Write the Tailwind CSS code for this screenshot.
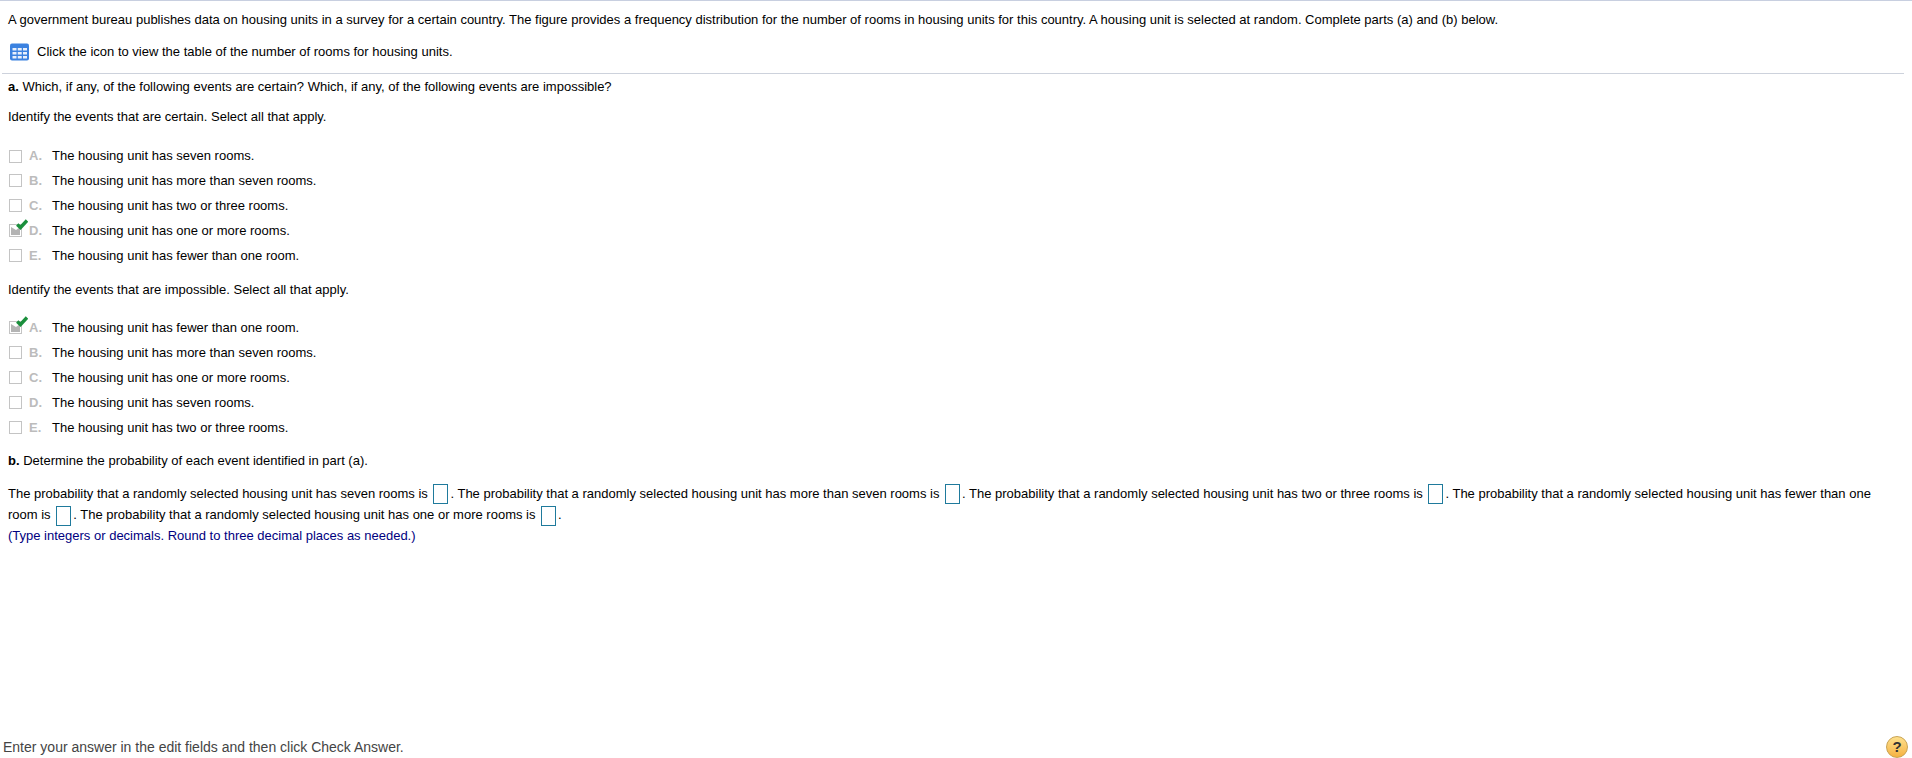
<!DOCTYPE html>
<html lang="en">
<head>
    <meta charset="UTF-8">
    <title>Housing units question</title>
    <script src="https://cdn.jsdelivr.net/npm/@tailwindcss/browser@4"></script>
</head>
<body class="bg-white text-black font-['Liberation_Sans',Arial,sans-serif] text-[13px] leading-[16px]">
<div class="h-[758px] flex flex-col overflow-hidden border-t border-[#c8cfe0]">
    <div class="flex-1 pl-2 pr-[32px]">
        <p class="mt-[11px]">A government bureau publishes data on housing units in a survey for a certain country. The figure provides a frequency distribution for the number of rooms in housing units for this country. A housing unit is selected at random. Complete parts (a) and (b) below.</p>

        <div class="flex items-center mt-[15px] h-[18px] ml-[2px]">
            <svg class="w-[19px] h-[19px] mr-[8px]" viewBox="0 0 19 19">
                <rect x="0" y="0.5" width="19" height="17" rx="2" fill="#3b82e0"/>
                <g fill="#e8f0fc">
                    <rect x="2.5" y="5" width="4" height="2.5"/><rect x="7.75" y="5" width="4" height="2.5"/><rect x="13" y="5" width="4" height="2.5"/>
                    <rect x="2.5" y="9" width="4" height="2.5"/><rect x="7.75" y="9" width="4" height="2.5"/><rect x="13" y="9" width="4" height="2.5"/>
                    <rect x="2.5" y="13" width="4" height="2.5"/><rect x="7.75" y="13" width="4" height="2.5"/><rect x="13" y="13" width="4" height="2.5"/>
                </g>
            </svg>
            <span>Click the icon to view the table of the number of rooms for housing units.</span>
        </div>

        <hr class="mt-[12px] -ml-[6px] -mr-[24px] border-t border-[#cdd2dc]">

        <p class="mt-[5px]"><b>a.</b> Which, if any, of the following events are certain? Which, if any, of the following events are impossible?</p>
        <p class="mt-[14px]">Identify the events that are certain. Select all that apply.</p>

        <!-- first option list -->
        <ul class="mt-[23px] flex flex-col gap-[8.9px]">
            <li class="flex items-center h-[16px]"><span class="w-[13px] h-[13px] ml-[1px] border border-[#c4c4c4]"></span><span class="w-[30px] pl-[7px] font-bold text-[#bcbcbc]">A.</span><span>The housing unit has seven rooms.</span></li>
            <li class="flex items-center h-[16px]"><span class="w-[13px] h-[13px] ml-[1px] border border-[#c4c4c4]"></span><span class="w-[30px] pl-[7px] font-bold text-[#bcbcbc]">B.</span><span>The housing unit has more than seven rooms.</span></li>
            <li class="flex items-center h-[16px]"><span class="w-[13px] h-[13px] ml-[1px] border border-[#c4c4c4]"></span><span class="w-[30px] pl-[7px] font-bold text-[#bcbcbc]">C.</span><span>The housing unit has two or three rooms.</span></li>
            <li class="flex items-center h-[16px]">
                <span class="relative w-[13px] h-[13px] ml-[1px] border border-[#c4c4c4]">
                    <svg class="absolute top-[1px] left-[1px] w-[9px] h-[9px]" viewBox="0 0 9 9"><path d="M0 1 L5 4 L9 1 V9 H0 Z" fill="#b4b4b4"/></svg>
                    <svg class="absolute -top-[6px] left-[6px] w-[12px] h-[11px]" viewBox="0 0 12 11"><path d="M1.2 5.5 L4.5 8.5 L11 1.5" fill="none" stroke="#1a8f3c" stroke-width="3.4"/></svg>
                </span>
                <span class="w-[30px] pl-[7px] font-bold text-[#bcbcbc]">D.</span><span>The housing unit has one or more rooms.</span>
            </li>
            <li class="flex items-center h-[16px]"><span class="w-[13px] h-[13px] ml-[1px] border border-[#c4c4c4]"></span><span class="w-[30px] pl-[7px] font-bold text-[#bcbcbc]">E.</span><span>The housing unit has fewer than one room.</span></li>
        </ul>

        <p class="mt-[18px]">Identify the events that are impossible. Select all that apply.</p>

        <!-- second option list -->
        <ul class="mt-[22px] flex flex-col gap-[9px]">
            <li class="flex items-center h-[16px]">
                <span class="relative w-[13px] h-[13px] ml-[1px] border border-[#c4c4c4]">
                    <svg class="absolute top-[1px] left-[1px] w-[9px] h-[9px]" viewBox="0 0 9 9"><path d="M0 1 L5 4 L9 1 V9 H0 Z" fill="#b4b4b4"/></svg>
                    <svg class="absolute -top-[6px] left-[6px] w-[12px] h-[11px]" viewBox="0 0 12 11"><path d="M1.2 5.5 L4.5 8.5 L11 1.5" fill="none" stroke="#1a8f3c" stroke-width="3.4"/></svg>
                </span>
                <span class="w-[30px] pl-[7px] font-bold text-[#bcbcbc]">A.</span><span>The housing unit has fewer than one room.</span>
            </li>
            <li class="flex items-center h-[16px]"><span class="w-[13px] h-[13px] ml-[1px] border border-[#c4c4c4]"></span><span class="w-[30px] pl-[7px] font-bold text-[#bcbcbc]">B.</span><span>The housing unit has more than seven rooms.</span></li>
            <li class="flex items-center h-[16px]"><span class="w-[13px] h-[13px] ml-[1px] border border-[#c4c4c4]"></span><span class="w-[30px] pl-[7px] font-bold text-[#bcbcbc]">C.</span><span>The housing unit has one or more rooms.</span></li>
            <li class="flex items-center h-[16px]"><span class="w-[13px] h-[13px] ml-[1px] border border-[#c4c4c4]"></span><span class="w-[30px] pl-[7px] font-bold text-[#bcbcbc]">D.</span><span>The housing unit has seven rooms.</span></li>
            <li class="flex items-center h-[16px]"><span class="w-[13px] h-[13px] ml-[1px] border border-[#c4c4c4]"></span><span class="w-[30px] pl-[7px] font-bold text-[#bcbcbc]">E.</span><span>The housing unit has two or three rooms.</span></li>
        </ul>

        <p class="mt-[17px]"><b>b.</b> Determine the probability of each event identified in part (a).</p>

        <p class="mt-[14px] leading-[21px]">The probability that a randomly selected housing unit has seven rooms is <span class="inline-block align-middle w-[15px] h-[20px] mx-[2px] border border-[#1f7a9c]"></span>. The probability that a randomly selected housing unit has more than seven rooms is <span class="inline-block align-middle w-[15px] h-[20px] mx-[2px] border border-[#1f7a9c]"></span>. The probability that a randomly selected housing unit has two or three rooms is <span class="inline-block align-middle w-[15px] h-[20px] mx-[2px] border border-[#1f7a9c]"></span>. The probability that a randomly selected housing unit has fewer than one room is <span class="inline-block align-middle w-[15px] h-[20px] mx-[2px] border border-[#1f7a9c]"></span>. The probability that a randomly selected housing unit has one or more rooms is <span class="inline-block align-middle w-[15px] h-[20px] mx-[2px] border border-[#1f7a9c]"></span>.</p>
        <p class="mt-[2px] text-[#000080]">(Type integers or decimals. Round to three decimal places as needed.)</p>
    </div>

    <div class="flex items-center justify-between h-[22px] pl-[3px] pr-[4px] text-[14px] text-[#444]">
        <span>Enter your answer in the edit fields and then click Check Answer.</span>
        <span class="w-[22px] h-[22px] rounded-full border border-[#c9a352] bg-linear-to-b from-[#fde08c] to-[#f5b23e] flex items-center justify-center font-bold text-[15px] text-[#333]">?</span>
    </div>
</div>
</body>
</html>
